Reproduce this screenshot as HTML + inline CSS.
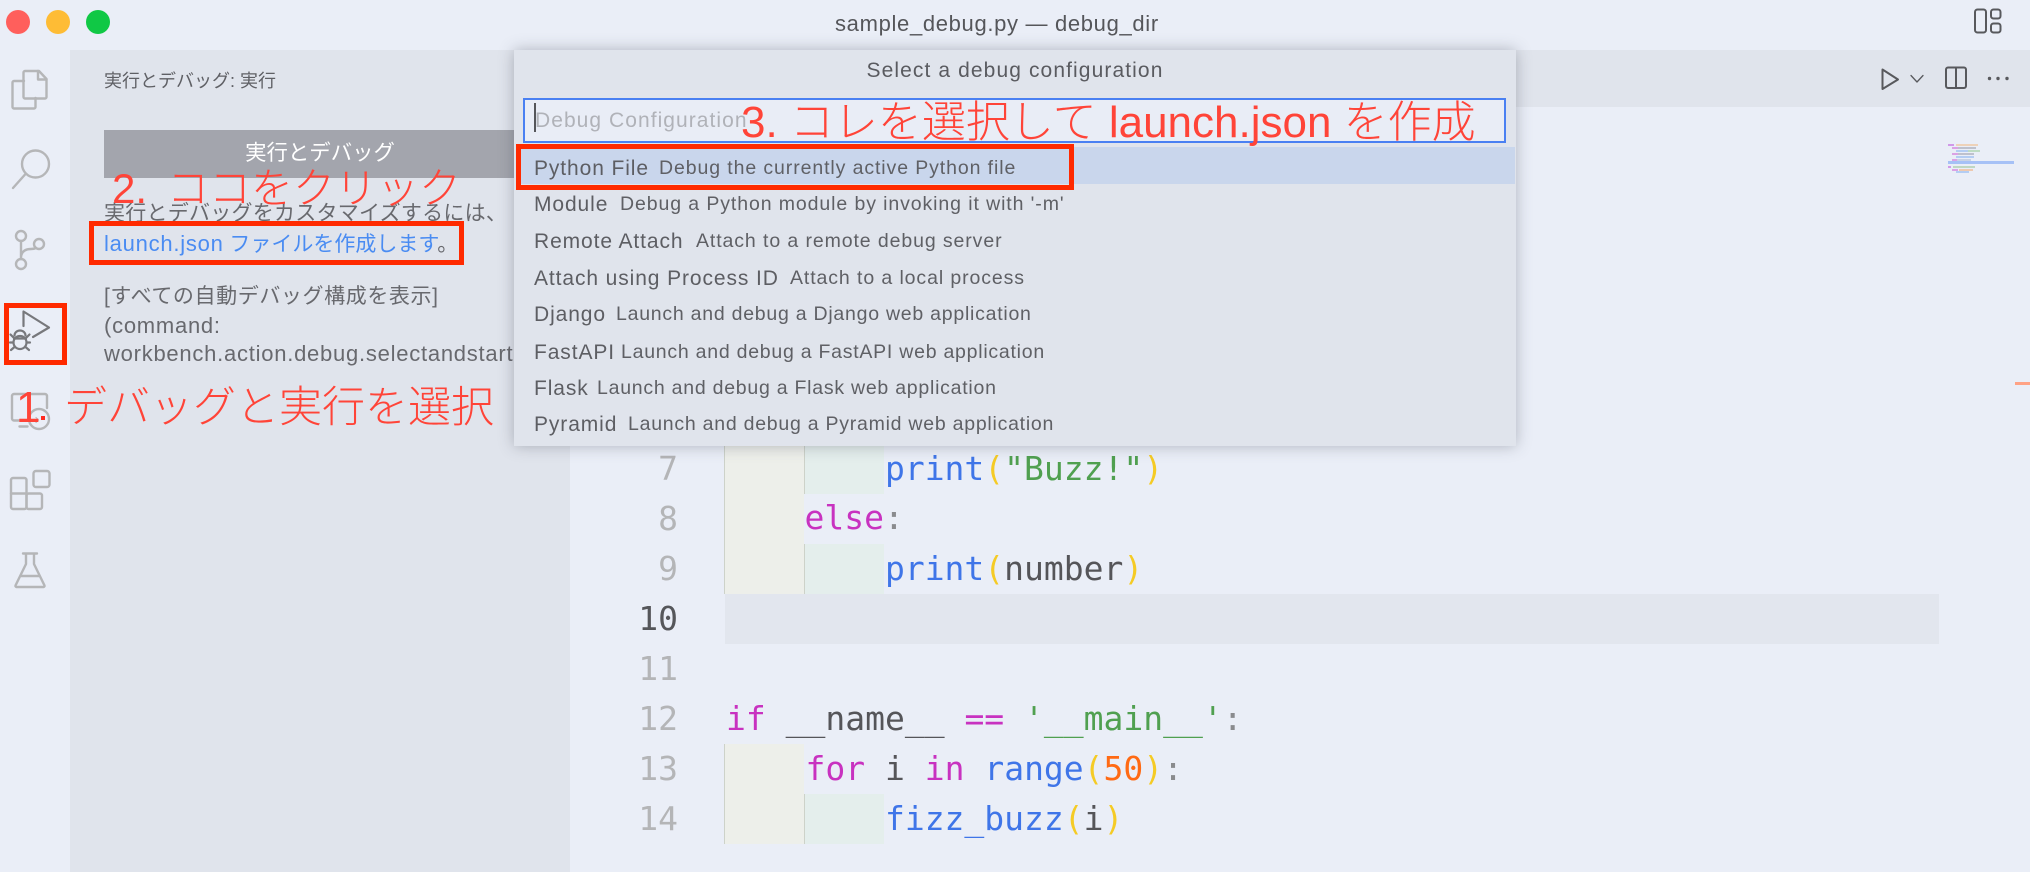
<!DOCTYPE html>
<html lang="ja"><head><meta charset="utf-8"><title>sample_debug.py — debug_dir</title>
<style>
html,body{margin:0;padding:0;width:2030px;height:872px;overflow:hidden;background:#eaeef7}
body{position:relative;font-family:"Liberation Sans","Noto Sans CJK JP",sans-serif;color:#606268}
.a{position:absolute;white-space:pre}
.side{font-size:21px;line-height:30px;height:30px;color:#68696e;left:104px}
.lat{font-size:22px;letter-spacing:.75px}
.l{font-size:21px;line-height:36px;height:36px;letter-spacing:.9px;color:#5d5e63;left:534px}
.d{font-size:19.5px;line-height:36px;height:36px;letter-spacing:.9px;color:#5f6065}
.e{letter-spacing:.75px}
.c{font-family:"DejaVu Sans Mono",monospace;font-size:33px;line-height:50px;height:50px;color:#555559;left:726px}
.n{font-family:"DejaVu Sans Mono",monospace;font-size:33px;line-height:50px;height:50px;color:#b4b5b7;left:600px;width:78px;text-align:right}
.k{color:#c832c0}.f{color:#3f75e8}.y{color:#f5cb25}.g{color:#50a050}.o{color:#ff6a14}.p{color:#8a8b8e}
.red{position:absolute;border:5px solid #ff2a00;box-sizing:border-box}
.ann{position:absolute;white-space:pre;color:#ff4438;font-family:"Liberation Sans","Noto Sans CJK JP",sans-serif;font-weight:300}
.i1{position:absolute;background:#edefea}.i2{position:absolute;background:#e4eeec}
.g1{position:absolute;width:1px;background:#cdd2c9}
.m{position:absolute;height:2px;opacity:.6}
</style></head><body>

<!-- sidebar and tab bar -->
<div class="a" style="left:70px;top:50px;width:500px;height:822px;background:#e0e4ec"></div>
<div class="a" style="left:570px;top:50px;width:1460px;height:57px;background:#e0e4ec"></div>

<!-- traffic lights -->
<div class="a" style="left:6px;top:10px;width:24px;height:24px;border-radius:50%;background:#ff5f5c"></div>
<div class="a" style="left:46px;top:10px;width:24px;height:24px;border-radius:50%;background:#febc35"></div>
<div class="a" style="left:86px;top:10px;width:24px;height:24px;border-radius:50%;background:#10c845"></div>
<div class="a" style="left:835px;top:8px;width:322px;text-align:center;font-size:22px;line-height:32px;letter-spacing:.67px;color:#55565a">sample_debug.py — debug_dir</div>

<!-- activity + toolbar icons -->
<svg class="a" style="left:0;top:0" width="2030" height="872" fill="none" stroke-linejoin="round" stroke-linecap="round">
 <g stroke="#b5b6b8" stroke-width="2.4">
  <path d="M24 81H14a1.5 1.5 0 0 0-1.5 1.5V107a1.5 1.5 0 0 0 1.5 1.5h20a1.5 1.5 0 0 0 1.5-1.5V98"/>
  <path d="M25 71h14l7.5 8v18a1.5 1.5 0 0 1-1.5 1.5H25a1.5 1.500 0 0 1-1.500-1.500V72.500a1.500 1.500 0 0 1 1.500-1.500z"/>
  <path d="M38 71v8.500h8.500"/>
  <circle cx="35.500" cy="164" r="13.500"/><path d="M25.500 174L13 188"/>
  <circle cx="21" cy="236" r="5"/><circle cx="21" cy="264" r="5"/><circle cx="39" cy="244" r="5"/>
  <path d="M21 241v18M21 258c0-7 5-9 10-9 3 0 5-1 5-1"/>
  <path d="M27 420.500H14a2 2 0 0 1-2-2V396a2 2 0 0 1 2-2H45a2 2 0 0 1 2 2v12M19.500 426.500h8"/>
  <circle cx="39" cy="419" r="10"/><path d="M36 417.500l2.500 2.500-2.500 2.500" stroke-width="1.200"/>
  <rect x="11" y="478" width="15.500" height="31" rx="2"/><rect x="26.500" y="493.500" width="15.500" height="15.500" rx="2"/>
  <rect x="33.500" y="471" width="16" height="16" rx="2.500"/><path d="M11 493.500h15.500"/>
  <path d="M23 553.500h14M26 553.500v10.500l-10.500 21.500a1.200 1.200 0 0 0 1 1.500h27a1.200 1.200 0 0 0 1-1.500L34 564V553.500M20.500 576h19"/>
 </g>
 <rect x="41" y="416" width="4" height="4" fill="#ff2a20"/>
 <g stroke="#77787c" stroke-width="2.200">
  <path d="M23.500 326V311.500L49 327.500 33 337"/>
  <ellipse cx="20" cy="342.500" rx="6.500" ry="6.500"/>
  <path d="M14.500 335.500a5.500 5 0 0 1 11 0M13.500 337.500l-3-3M26.500 337.500l3-3M13.500 342.500h-3.500M26.500 342.500h3.500M14.500 347l-3.500 3M25.500 347l3.500 3M14 338.500h12"/>
 </g>
 <g stroke="#58595d" stroke-width="2">
  <rect x="1975" y="9.500" width="11" height="23" rx="2.500"/><rect x="1991" y="9.500" width="9.500" height="9" rx="2.500"/><rect x="1991" y="23.500" width="9.500" height="9" rx="2.500"/>
  <path d="M1882.500 69.500L1898 79.500 1882.500 89Z"/>
  <rect x="1946" y="67.500" width="20" height="20.500" rx="2"/><path d="M1956 67.500v20.500"/>
 </g>
 <path d="M1911 75.500l6 6.500 6-6.500" stroke="#58595d" stroke-width="1.300"/>
 <circle cx="1989.500" cy="78.500" r="1.700" fill="#58595d"/><circle cx="1998" cy="78.500" r="1.700" fill="#58595d"/><circle cx="2007" cy="78.500" r="1.700" fill="#58595d"/>
</svg>

<!-- sidebar content -->
<div class="a" style="left:104px;top:66px;font-size:18px;line-height:30px;color:#5f6065">実行とデバッグ: 実行</div>
<div class="a" style="left:104px;top:130px;width:432px;height:48px;background:#a3a5ad;color:#fff;font-size:21.4px;line-height:46px;text-align:center">実行とデバッグ</div>
<div class="a side" style="top:199px;letter-spacing:.25px">実行とデバッグをカスタマイズするには、</div>
<div class="a side" style="top:229px"><span style="color:#4a8cf2"><span class="lat">launch.json</span> ファイルを作成します</span>。</div>
<div class="a side" style="top:282px;letter-spacing:.6px">[すべての自動デバッグ構成を表示]</div>
<div class="a side lat" style="top:311px">(command:</div>
<div class="a side lat" style="top:339px">workbench.action.debug.selectandstart</div>

<!-- editor -->
<div class="a" style="left:725px;top:594px;width:1214px;height:50px;background:#e2e6ee"></div>
<div class="i1" style="left:725px;top:444px;width:79px;height:150px"></div>
<div class="i2" style="left:805px;top:444px;width:79px;height:50px"></div>
<div class="i2" style="left:805px;top:544px;width:79px;height:50px"></div>
<div class="i1" style="left:725px;top:744px;width:79px;height:100px"></div>
<div class="i2" style="left:805px;top:794px;width:79px;height:50px"></div>
<div class="g1" style="left:724px;top:444px;height:150px"></div>
<div class="g1" style="left:804px;top:444px;height:50px"></div>
<div class="g1" style="left:804px;top:544px;height:50px"></div>
<div class="g1" style="left:724px;top:744px;height:100px"></div>
<div class="g1" style="left:804px;top:794px;height:50px"></div>

<div class="a n" style="top:444px">7</div>
<div class="a n" style="top:494px">8</div>
<div class="a n" style="top:544px">9</div>
<div class="a n" style="top:594px;color:#55565a">10</div>
<div class="a n" style="top:644px">11</div>
<div class="a n" style="top:694px">12</div>
<div class="a n" style="top:744px">13</div>
<div class="a n" style="top:794px">14</div>

<div class="a c" style="top:444px">        <span class="f">print</span><span class="y">(</span><span class="g">"Buzz!"</span><span class="y">)</span></div>
<div class="a c" style="top:493px;left:725px">    <span class="k">else</span><span class="p">:</span></div>
<div class="a c" style="top:544px">        <span class="f">print</span><span class="y">(</span>number<span class="y">)</span></div>
<div class="a c" style="top:694px"><span class="k">if</span> __name__ <span class="k">==</span> <span class="g">'__main__'</span><span class="p">:</span></div>
<div class="a c" style="top:744px">    <span class="k">for</span> i <span class="k">in</span> <span class="f">range</span><span class="y">(</span><span class="o">50</span><span class="y">)</span><span class="p">:</span></div>
<div class="a c" style="top:794px">        <span class="f">fizz_buzz</span><span class="y">(</span>i<span class="y">)</span></div>

<!-- minimap -->
<div class="m" style="left:1948px;top:144px;width:6px;background:#c060e0"></div><div class="m" style="left:1956px;top:144px;width:22px;background:#f0c090"></div>
<div class="m" style="left:1952px;top:147px;width:6px;background:#d070d8"></div><div class="m" style="left:1958px;top:147px;width:18px;background:#a0a4b0"></div>
<div class="m" style="left:1956px;top:150px;width:12px;background:#90b8f0"></div><div class="m" style="left:1968px;top:150px;width:12px;background:#a0d0a0"></div>
<div class="m" style="left:1952px;top:153px;width:6px;background:#d070d8"></div><div class="m" style="left:1958px;top:153px;width:16px;background:#a0a4b0"></div>
<div class="m" style="left:1956px;top:156px;width:18px;background:#90b8f0"></div>
<div class="m" style="left:1952px;top:159px;width:5px;background:#d070d8"></div><div class="m" style="left:1957px;top:159px;width:14px;background:#b0c0d8"></div>
<div class="a" style="left:1948px;top:161px;width:66px;height:3px;background:#a6c1f6"></div>
<div class="m" style="left:1948px;top:166px;width:3px;background:#c060e0"></div><div class="m" style="left:1953px;top:166px;width:22px;background:#a0c8a0"></div>
<div class="m" style="left:1952px;top:169px;width:6px;background:#d070d8"></div><div class="m" style="left:1959px;top:169px;width:14px;background:#f0b080"></div>
<div class="m" style="left:1956px;top:171px;width:13px;background:#90b8f0"></div>
<div class="a" style="left:2015px;top:382px;width:15px;height:3px;background:#ffa285"></div>

<!-- quick pick -->
<div class="a" style="left:514px;top:50px;width:1002px;height:396px;background:#e0e4ec;box-shadow:0 0 14px rgba(60,64,80,.34)"></div>
<div class="a" style="left:514px;top:55px;width:1002px;text-align:center;font-size:21px;line-height:32px;letter-spacing:1.1px;color:#5a5b60">Select a debug configuration</div>
<div class="a" style="left:523px;top:98px;width:983px;height:45px;box-sizing:border-box;border:2px solid #4a80f2;background:#e9edf6"></div>
<div class="a" style="left:534px;top:103px;width:2px;height:29px;background:#55565a"></div>
<div class="a" style="left:535px;top:104px;font-size:21px;line-height:34px;letter-spacing:1.05px;color:#b0b2b8">Debug Configuration</div>
<div class="a" style="left:516px;top:147px;width:999px;height:37px;background:#c9d6ec"></div>

<div class="a l" style="top:151px">Python File</div><div class="a d" style="left:659px;top:150px">Debug the currently active Python file</div>
<div class="a l" style="top:187px">Module</div><div class="a d" style="left:620px;top:186px">Debug a Python module by invoking it with '-m'</div>
<div class="a l" style="top:224px">Remote Attach</div><div class="a d" style="left:696px;top:223px">Attach to a remote debug server</div>
<div class="a l" style="top:261px">Attach using Process ID</div><div class="a d" style="left:790px;top:260px">Attach to a local process</div>
<div class="a l" style="top:297px">Django</div><div class="a d e" style="left:616px;top:296px">Launch and debug a Django web application</div>
<div class="a l" style="top:335px">FastAPI</div><div class="a d e" style="left:621px;top:334px">Launch and debug a FastAPI web application</div>
<div class="a l" style="top:371px">Flask</div><div class="a d e" style="left:597px;top:370px">Launch and debug a Flask web application</div>
<div class="a l" style="top:407px">Pyramid</div><div class="a d e" style="left:628px;top:406px">Launch and debug a Pyramid web application</div>

<!-- annotations -->
<div class="red" style="left:4px;top:303px;width:63px;height:62px"></div>
<div class="red" style="left:89px;top:221px;width:375px;height:44px"></div>
<div class="red" style="left:516px;top:144px;width:558px;height:46px"></div>
<div class="ann" style="left:16px;top:377px;font-size:44px;line-height:62px">1</div>
<div class="ann" style="left:64px;top:377px;font-size:43px;line-height:62px">デバッグと実行を選択</div>
<div class="ann" style="left:112px;top:158px;font-size:42px;line-height:62px">2.</div>
<div class="ann" style="left:167px;top:158px;font-size:42px;line-height:62px">ココをクリック</div>
<div class="ann" style="left:741px;top:92px;font-size:44px;line-height:62px">3. コレを選択して launch.json を作成</div>
</body></html>
